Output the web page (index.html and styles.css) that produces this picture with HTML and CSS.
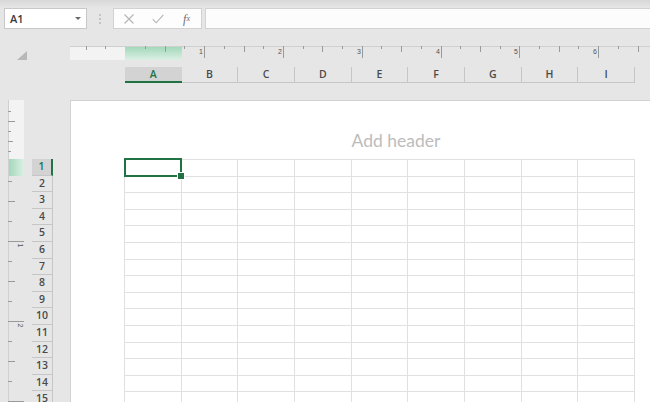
FILE: index.html
```html
<!DOCTYPE html>
<html>
<head>
<meta charset="utf-8">
<link rel="stylesheet" href="styles.css">
</head>
<body>
<div class="toolbar">
  <div class="namebox"><span>A1</span><span class="dd"></span></div>
  <div class="grip"><span></span><span></span><span></span></div>
  <div class="fxbtns">
    <span class="btn"><svg width="10" height="10" viewBox="0 0 10 10"><path d="M0.5 0.5L9.5 9.5M9.5 0.5L0.5 9.5" stroke="#b4b4b4" stroke-width="1.1" fill="none"/></svg></span>
    <span class="btn"><svg width="12" height="10" viewBox="0 0 12 10"><path d="M0.7 5.2L4.2 8.8L11.3 0.8" stroke="#b4b4b4" stroke-width="1.1" fill="none"/></svg></span>
    <span class="btn fx"><i>f</i><sub>x</sub></span>
  </div>
  <div class="formula"></div>
</div>
<div class="workspace">
  <div class="corner"><span class="tri"></span></div>
  <div class="colarea">
    <svg class="hruler" width="580" height="14" viewBox="0 0 580 14">
      <defs>
        <linearGradient id="gh" x1="0" y1="0" x2="0" y2="1">
          <stop offset="0" stop-color="#9fd7b8"/>
          <stop offset="1" stop-color="#dcefe4"/>
        </linearGradient>
      </defs>
      <rect x="0" y="0" width="55" height="14" fill="#f3f3f3"/>
      <rect x="55" y="0" width="57" height="14" fill="url(#gh)"/>
      <line x1="0" y1="0.5" x2="580" y2="0.5" stroke="#d0d0d0"/>
      <g stroke="#9a9a9a" stroke-width="1">
        <line x1="16.5" y1="0" x2="16.5" y2="4"/>
        <line x1="35.5" y1="0" x2="35.5" y2="3"/>
        <line x1="75.5" y1="0" x2="75.5" y2="3"/>
        <line x1="95.5" y1="0" x2="95.5" y2="6"/>
        <line x1="114.5" y1="0" x2="114.5" y2="3"/>
        <line x1="134.5" y1="0" x2="134.5" y2="12"/>
        <line x1="154.5" y1="0" x2="154.5" y2="3"/>
        <line x1="174.5" y1="0" x2="174.5" y2="6"/>
        <line x1="193.5" y1="0" x2="193.5" y2="3"/>
        <line x1="213.5" y1="0" x2="213.5" y2="12"/>
        <line x1="233.5" y1="0" x2="233.5" y2="3"/>
        <line x1="252.5" y1="0" x2="252.5" y2="6"/>
        <line x1="272.5" y1="0" x2="272.5" y2="3"/>
        <line x1="292.5" y1="0" x2="292.5" y2="12"/>
        <line x1="311.5" y1="0" x2="311.5" y2="3"/>
        <line x1="331.5" y1="0" x2="331.5" y2="6"/>
        <line x1="351.5" y1="0" x2="351.5" y2="3"/>
        <line x1="371.5" y1="0" x2="371.5" y2="12"/>
        <line x1="390.5" y1="0" x2="390.5" y2="3"/>
        <line x1="410.5" y1="0" x2="410.5" y2="6"/>
        <line x1="430.5" y1="0" x2="430.5" y2="3"/>
        <line x1="449.5" y1="0" x2="449.5" y2="12"/>
        <line x1="469.5" y1="0" x2="469.5" y2="3"/>
        <line x1="489.5" y1="0" x2="489.5" y2="6"/>
        <line x1="508.5" y1="0" x2="508.5" y2="3"/>
        <line x1="528.5" y1="0" x2="528.5" y2="12"/>
        <line x1="548.5" y1="0" x2="548.5" y2="3"/>
        <line x1="568.5" y1="0" x2="568.5" y2="6"/>
      </g>
      <g class="rlabel" text-anchor="end">
        <text x="133" y="8">1</text>
        <text x="212" y="8">2</text>
        <text x="291" y="8">3</text>
        <text x="370" y="8">4</text>
        <text x="448" y="8">5</text>
        <text x="527" y="8">6</text>
      </g>
    </svg>
    <div class="colheads">
      <div class="ch sel">A</div>
      <div class="ch">B</div>
      <div class="ch">C</div>
      <div class="ch">D</div>
      <div class="ch">E</div>
      <div class="ch">F</div>
      <div class="ch">G</div>
      <div class="ch">H</div>
      <div class="ch">I</div>
    </div>
  </div>
  <div class="rowarea">
    <svg class="vruler" width="17" height="302" viewBox="0 0 17 302">
      <defs>
        <linearGradient id="gv" x1="0" y1="0" x2="1" y2="0">
          <stop offset="0" stop-color="#9fd7b8"/>
          <stop offset="1" stop-color="#dcefe4"/>
        </linearGradient>
      </defs>
      <rect x="0" y="0" width="16" height="59" fill="#f3f3f3"/>
      <rect x="0" y="59" width="16" height="17" fill="url(#gv)"/>
      <line x1="0.5" y1="0" x2="0.5" y2="302" stroke="#d0d0d0"/>
      <g stroke="#9a9a9a" stroke-width="1">
        <line x1="0" y1="11.5" x2="3" y2="11.5"/>
        <line x1="0" y1="21.5" x2="7" y2="21.5"/>
        <line x1="0" y1="31.5" x2="3" y2="31.5"/>
        <line x1="0" y1="41.5" x2="5" y2="41.5"/>
        <line x1="0" y1="51.5" x2="3" y2="51.5"/>
        <line x1="0" y1="81.5" x2="4" y2="81.5"/>
        <line x1="0" y1="101.5" x2="7" y2="101.5"/>
        <line x1="0" y1="121.5" x2="4" y2="121.5"/>
        <line x1="0" y1="141.5" x2="16" y2="141.5"/>
        <line x1="0" y1="161.5" x2="4" y2="161.5"/>
        <line x1="0" y1="181.5" x2="7" y2="181.5"/>
        <line x1="0" y1="201.5" x2="4" y2="201.5"/>
        <line x1="0" y1="221.5" x2="16" y2="221.5"/>
        <line x1="0" y1="241.5" x2="4" y2="241.5"/>
        <line x1="0" y1="261.5" x2="7" y2="261.5"/>
        <line x1="0" y1="281.5" x2="4" y2="281.5"/>
        <line x1="0" y1="301.5" x2="16" y2="301.5"/>
      </g>
      <g class="rlabel">
        <text transform="translate(9.5 143.5) rotate(90)">1</text>
        <text transform="translate(9.5 223.5) rotate(90)">2</text>
      </g>
    </svg>
    <div class="rowheads">
      <div class="rh sel">1</div>
      <div class="rh">2</div>
      <div class="rh">3</div>
      <div class="rh">4</div>
      <div class="rh">5</div>
      <div class="rh">6</div>
      <div class="rh">7</div>
      <div class="rh">8</div>
      <div class="rh">9</div>
      <div class="rh">10</div>
      <div class="rh">11</div>
      <div class="rh">12</div>
      <div class="rh">13</div>
      <div class="rh">14</div>
      <div class="rh">15</div>
    </div>
  </div>
  <div class="page">
    <div class="hdr">Add header</div>
    <div class="cells">
      <div class="c sel"></div><div class="c"></div><div class="c"></div><div class="c"></div><div class="c"></div><div class="c"></div><div class="c"></div><div class="c"></div><div class="c"></div>
      <div class="c"></div><div class="c"></div><div class="c"></div><div class="c"></div><div class="c"></div><div class="c"></div><div class="c"></div><div class="c"></div><div class="c"></div>
      <div class="c"></div><div class="c"></div><div class="c"></div><div class="c"></div><div class="c"></div><div class="c"></div><div class="c"></div><div class="c"></div><div class="c"></div>
      <div class="c"></div><div class="c"></div><div class="c"></div><div class="c"></div><div class="c"></div><div class="c"></div><div class="c"></div><div class="c"></div><div class="c"></div>
      <div class="c"></div><div class="c"></div><div class="c"></div><div class="c"></div><div class="c"></div><div class="c"></div><div class="c"></div><div class="c"></div><div class="c"></div>
      <div class="c"></div><div class="c"></div><div class="c"></div><div class="c"></div><div class="c"></div><div class="c"></div><div class="c"></div><div class="c"></div><div class="c"></div>
      <div class="c"></div><div class="c"></div><div class="c"></div><div class="c"></div><div class="c"></div><div class="c"></div><div class="c"></div><div class="c"></div><div class="c"></div>
      <div class="c"></div><div class="c"></div><div class="c"></div><div class="c"></div><div class="c"></div><div class="c"></div><div class="c"></div><div class="c"></div><div class="c"></div>
      <div class="c"></div><div class="c"></div><div class="c"></div><div class="c"></div><div class="c"></div><div class="c"></div><div class="c"></div><div class="c"></div><div class="c"></div>
      <div class="c"></div><div class="c"></div><div class="c"></div><div class="c"></div><div class="c"></div><div class="c"></div><div class="c"></div><div class="c"></div><div class="c"></div>
      <div class="c"></div><div class="c"></div><div class="c"></div><div class="c"></div><div class="c"></div><div class="c"></div><div class="c"></div><div class="c"></div><div class="c"></div>
      <div class="c"></div><div class="c"></div><div class="c"></div><div class="c"></div><div class="c"></div><div class="c"></div><div class="c"></div><div class="c"></div><div class="c"></div>
      <div class="c"></div><div class="c"></div><div class="c"></div><div class="c"></div><div class="c"></div><div class="c"></div><div class="c"></div><div class="c"></div><div class="c"></div>
      <div class="c"></div><div class="c"></div><div class="c"></div><div class="c"></div><div class="c"></div><div class="c"></div><div class="c"></div><div class="c"></div><div class="c"></div>
      <div class="c"></div><div class="c"></div><div class="c"></div><div class="c"></div><div class="c"></div><div class="c"></div><div class="c"></div><div class="c"></div><div class="c"></div>
    </div>
  </div>
</div>
</body>
</html>
```

FILE: styles.css
```css
* { box-sizing: border-box; }
html, body { margin: 0; padding: 0; }
body {
  width: 650px;
  height: 402px;
  overflow: hidden;
  background: #e6e6e6;
  font-family: "Open Sans", "Segoe UI", sans-serif;
  color: #444;
}

/* formula bar */
.toolbar {
  display: flex;
  align-items: flex-start;
  height: 38px;
  padding: 8px 0 0 4px;
  background: linear-gradient(#d8d8d8 0, #e2e2e2 6px, #e6e6e6 8px);
}
.namebox {
  width: 83px;
  height: 21px;
  background: #fff;
  border: 1px solid #c8c8c8;
  display: flex;
  align-items: center;
  justify-content: space-between;
  padding: 0 5px 0 5px;
  font-size: 11px;
  font-weight: 600;
  color: #3a3a3a;
}
.dd {
  width: 0;
  height: 0;
  border-left: 3px solid transparent;
  border-right: 3px solid transparent;
  border-top: 3px solid #6a6a6a;
}
.grip {
  width: 26px;
  height: 21px;
  display: flex;
  flex-direction: column;
  align-items: center;
  justify-content: center;
  gap: 2px;
}
.grip span {
  width: 2px;
  height: 2px;
  background: #c4c4c4;
}
.fxbtns {
  width: 89px;
  height: 21px;
  background: #fdfdfd;
  border: 1px solid #d2d2d2;
  display: grid;
  grid-template-columns: repeat(3, 1fr);
  align-items: center;
  justify-items: center;
}
.btn { display: flex; align-items: center; justify-content: center; }
.btn svg { display: block; }
.fx {
  font-family: "Liberation Serif", "DejaVu Serif", serif;
  font-size: 12px;
  color: #6e6e6e;
  line-height: 1;
}
.fx sub { font-size: 8px; font-style: italic; vertical-align: -2px; }
.formula {
  flex: 1;
  height: 21px;
  margin-left: 3px;
  margin-right: -2px;
  background: #fcfcfc;
  border: 1px solid #d2d2d2;
}

/* workspace */
.workspace {
  display: grid;
  grid-template-columns: 70px 1fr;
  grid-template-rows: 62px 302px;
  height: 364px;
}
.corner { padding: 13px 0 0 17px; }
.tri {
  display: block;
  width: 0;
  height: 0;
  border-left: 10px solid transparent;
  border-bottom: 9px solid #b8b8b8;
}
.colarea { padding-top: 8px; overflow: hidden; }
.hruler { display: block; }
.rlabel { font-family: "Liberation Sans", sans-serif; font-size: 7px; fill: #555; }
.colheads {
  display: grid;
  grid-template-columns: repeat(9, 56.67px);
  margin: 7px 0 0 55px;
  height: 16px;
}
.ch {
  border-right: 1px solid #c6c6c6;
  border-bottom: 1px solid #c6c6c6;
  font-size: 10.5px;
  font-weight: 600;
  line-height: 15px;
  text-align: center;
  color: #4a4a4a;
}
.ch.sel {
  background: #d3d3d3;
  border-right: none;
  border-bottom: 2px solid #217346;
  color: #217346;
  line-height: 14px;
}

.rowarea { display: flex; align-items: flex-start; overflow: hidden; }
.vruler { display: block; margin-left: 8px; flex: none; }
.rowheads {
  margin-left: 7px;
  padding-top: 59px;
  width: 21px;
}
.rh {
  height: 16.6px;
  border-right: 1px solid #c6c6c6;
  border-bottom: 1px solid #c6c6c6;
  font-size: 10.5px;
  font-weight: 600;
  line-height: 15.6px;
  text-align: center;
  color: #4a4a4a;
}
.rh.sel {
  background: #d3d3d3;
  border-right: 2px solid #217346;
  color: #217346;
}

/* page */
.page {
  background: #fff;
  border-top: 1px solid #d2d2d2;
  border-left: 1px solid #d2d2d2;
  overflow: hidden;
}
.hdr {
  width: 650px;
  height: 58px;
  padding-top: 30px;
  font-family: Lato, "Open Sans", sans-serif;
  font-size: 17.5px;
  line-height: 20px;
  text-align: center;
  color: #bcbcbc;
}
.cells {
  display: grid;
  grid-template-columns: repeat(9, 56.67px);
  grid-auto-rows: 16.6px;
  width: max-content;
  margin-left: 53px;
  border-top: 1px solid #e0e0e0;
  border-left: 1px solid #e0e0e0;
}
.c {
  border-right: 1px solid #e0e0e0;
  border-bottom: 1px solid #e0e0e0;
}
.c.sel { position: relative; }
.c.sel::after {
  content: "";
  position: absolute;
  left: -1px;
  top: -2px;
  right: -1px;
  bottom: -1px;
  border: 2px solid #217346;
}
.c.sel::before {
  content: "";
  position: absolute;
  right: -4px;
  bottom: -4px;
  width: 6px;
  height: 6px;
  background: #217346;
  border: 1px solid #fff;
  z-index: 1;
}
```
